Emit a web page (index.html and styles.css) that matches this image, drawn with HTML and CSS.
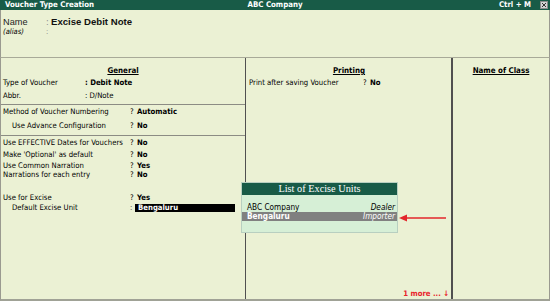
FILE: index.html
```html
<!DOCTYPE html>
<html>
<head>
<meta charset="utf-8">
<link rel="stylesheet" href="styles.css">
</head>
<body>
<div class="app">
  <div class="titlebar">
    <span class="t-left">Voucher Type Creation</span>
    <span class="t-center">ABC Company</span>
    <span class="t-right"><span class="ctrl">Ctrl + M</span><svg class="closebox" width="8" height="8" viewBox="0 0 8 8"><rect x="0.5" y="0.5" width="7" height="7" fill="#d4d4d4" stroke="#8a8a8a"/><path d="M2 2 L6 6 M6 2 L2 6" stroke="#333" stroke-width="1"/></svg></span>
  </div>
  <div class="header">
    <div class="namerow"><span class="nlabel">Name</span><span class="ncolon">:</span><span class="nvalue">Excise Debit Note</span></div>
    <div class="aliasrow"><span class="alabel">(alias)</span><span class="acolon">:</span></div>
  </div>
  <div class="main">
    <div class="col general">
      <div class="heading">General</div>
      <div class="row r1"><span class="lbl w80">Type of Voucher</span><span class="val bold">: Debit Note</span></div>
      <div class="row r2"><span class="lbl w80">Abbr.</span><span class="val">: D/Note</span></div>
      <div class="sec sec2">
        <div class="row r3"><span class="lbl w127">Method of Voucher Numbering</span><span class="q">?</span><span class="val bold">Automatic</span></div>
        <div class="row r4"><span class="lbl w127 ind">Use Advance Configuration</span><span class="q">?</span><span class="val bold">No</span></div>
      </div>
      <div class="sec sec3">
        <div class="row r5"><span class="lbl w127">Use EFFECTIVE Dates for Vouchers</span><span class="q">?</span><span class="val bold">No</span></div>
        <div class="row r6"><span class="lbl w127">Make 'Optional' as default</span><span class="q">?</span><span class="val bold">No</span></div>
        <div class="row r7"><span class="lbl w127">Use Common Narration</span><span class="q">?</span><span class="val bold">Yes</span></div>
        <div class="row r8"><span class="lbl w127">Narrations for each entry</span><span class="q">?</span><span class="val bold">No</span></div>
        <div class="row r9"><span class="lbl w127">Use for Excise</span><span class="q">?</span><span class="val bold">Yes</span></div>
        <div class="row r10"><span class="lbl w127 ind">Default Excise Unit</span><span class="q colon">:</span><span class="inputbox">Bengaluru</span></div>
      </div>
    </div>
    <div class="col printing">
      <div class="heading">Printing</div>
      <div class="row r1"><span class="lbl w112">Print after saving Voucher</span><span class="q">?</span><span class="val bold">No</span></div>
      <div class="more">1 more ... ↓</div>
    </div>
    <div class="col classes">
      <div class="heading">Name of Class</div>
    </div>
  </div>

  <div class="popup">
    <div class="popup-head">List of Excise Units</div>
    <div class="popup-body">
      <div class="prow"><span>ABC Company</span><span class="ptype">Dealer</span></div>
      <div class="prow sel"><span>Bengaluru</span><span class="ptype">Importer</span></div>
    </div>
  </div>
  <svg class="arrow" width="50" height="10" viewBox="0 0 50 10">
    <line x1="6" y1="5" x2="47" y2="5" stroke="#e3262b" stroke-width="1.6"/>
    <polygon points="0,5 8,1.5 8,8.5" fill="#e3262b"/>
  </svg>
</div>
</body>
</html>
```

FILE: styles.css
```css
* { box-sizing: border-box; }
html, body { margin: 0; padding: 0; }
body {
  width: 550px;
  height: 301px;
  overflow: hidden;
  font-family: "DejaVu Sans Condensed", "DejaVu Sans", sans-serif;
  font-stretch: semi-condensed;
  font-size: 7.7px;
  color: #000;
  background: #ebf1d4;
}
.app {
  position: relative;
  width: 550px;
  height: 301px;
  display: flex;
  flex-direction: column;
  background: #ebf1d4;
}
.titlebar {
  height: 10px;
  flex: none;
  background: #185b47;
  color: #ffffff;
  font-weight: bold;
  font-size: 7.8px;
  line-height: 10px;
  display: flex;
  justify-content: space-between;
  padding: 0 2px 0 5px;
  position: relative;
}
.t-center {
  position: absolute;
  left: 0; right: 0;
  text-align: center;
  pointer-events: none;
}
.t-right { display: flex; align-items: center; gap: 9px; position: relative; z-index: 1; }
.ctrl { flex: none; }
.closebox { display: block; flex: none; }
.header {
  height: 48px;
  flex: none;
  border-left: 1px solid #9a9a90;
  border-right: 1px solid #9a9a90;
  border-bottom: 1px solid #a8aa98;
  padding: 6px 0 0 2px;
}
.namerow { display: flex; align-items: baseline; height: 11px; line-height: 11px; }
.nlabel { width: 43px; font-size: 9.2px; font-family: "Liberation Sans", Arial, sans-serif; color: #222; }
.ncolon { width: 5px; color: #888; font-size: 9px; }
.nvalue { font-weight: bold; font-size: 9.6px; color: #111; font-family: "Liberation Sans", Arial, sans-serif; }
.aliasrow { display: flex; height: 9px; line-height: 9px; font-style: italic; font-size: 7.5px; }
.alabel { width: 43px; }
.acolon { color: #888; font-style: normal; }
.main {
  flex: 1;
  display: flex;
  border-left: 1px solid #9a9a90;
  border-right: 1px solid #9a9a90;
  border-bottom: 2px solid #a0a296;
}
.col { display: flex; flex-direction: column; }
.general { width: 245px; border-right: 1px solid #505050; }
.printing { width: 207px; border-right: 2px solid #505050; padding-left: 1px; }
.classes { flex: 1; }
.heading {
  height: 19px;
  padding-top: 8px;
  line-height: 10px;
  text-align: center;
  font-weight: bold;
  text-decoration: underline;
  font-size: 7.9px;
}
.row { display: flex; white-space: nowrap; padding-left: 2px; }
.lbl { flex: none; }
.w80 { width: 82px; }
.w127 { width: 127px; }
.w112 { width: 114px; }
.ind { padding-left: 9px; }
.q { width: 7px; flex: none; }
.colon { color: #555; }
.bold { font-weight: bold; }
.r1 { line-height: 12px; }
.r2 { line-height: 13px; margin-bottom: 2px; }
.sec { border-top: 1px solid #8c8c84; }
.sec2 { padding-top: 1px; padding-bottom: 2px; }
.sec3 { padding-top: 1px; }
.r3 { line-height: 12px; }
.r4 { line-height: 15px; }
.r5 { line-height: 12px; }
.r6 { line-height: 11px; }
.r7 { line-height: 11px; }
.r8 { line-height: 8px; }
.r9 { line-height: 12px; margin-top: 13px; }
.r10 { line-height: 8px; }
.inputbox {
  width: 100px;
  height: 8px;
  background: #000;
  color: #fff;
  font-weight: bold;
  padding-left: 3px;
  margin-left: -2px;
  line-height: 8px;
}
.more {
  margin-top: auto;
  align-self: flex-end;
  color: #e8232b;
  font-weight: bold;
  line-height: 9px;
  padding-right: 2px;
  padding-bottom: 1px;
}
.popup {
  position: absolute;
  left: 241px;
  top: 182px;
  width: 157px;
  height: 51px;
  background: #d6efd6;
  border: 1px solid #b8cfc0;
  display: flex;
  flex-direction: column;
}
.popup-head {
  height: 12px;
  background: #185b47;
  color: #fff;
  font-family: "Liberation Serif", "Times New Roman", serif;
  font-stretch: normal;
  font-size: 10.3px;
  line-height: 12px;
  text-align: center;
}
.popup-body { padding-top: 8px; }
.prow {
  display: flex;
  justify-content: space-between;
  padding: 0 2px 0 5px;
  height: 9px;
  line-height: 9px;
  font-size: 8.2px;
}
.prow.sel { background: #808080; color: #fff; font-weight: bold; }
.ptype { font-style: italic; font-weight: normal; }
.arrow {
  position: absolute;
  left: 399px;
  top: 213px;
}
```
